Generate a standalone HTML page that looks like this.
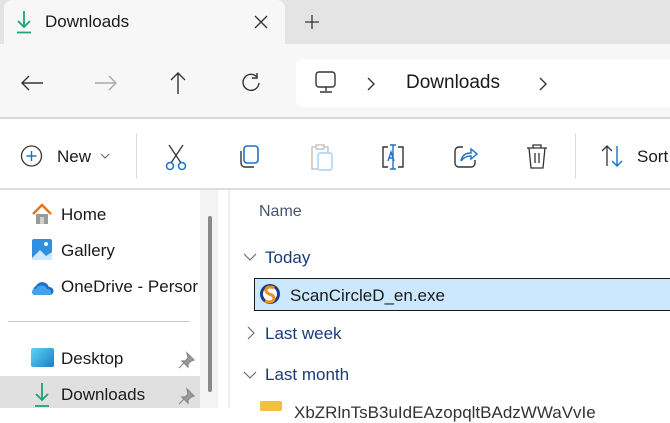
<!DOCTYPE html>
<html><head><meta charset="utf-8"><style>
*{margin:0;padding:0;box-sizing:border-box}
body{width:670px;height:408px;overflow:hidden;background:#fff;font-family:"Liberation Sans","DejaVu Sans",sans-serif;color:#1a1a1a;position:relative}
.a{position:absolute}
svg{position:absolute;overflow:visible}
.t{position:absolute;font-size:17px;white-space:nowrap}
.blue{color:#1b3a7a}
</style></head><body>
<div class="a" style="left:0;top:0;width:670px;height:46px;background:#e4e4e4"></div>
<div class="a" style="left:4px;top:0;width:281px;height:48px;background:#f7f7f7;border-radius:8px 8px 0 0"></div>
<div class="a" style="left:0;top:44px;width:670px;height:74px;background:#f7f7f7"></div>
<div class="a" style="left:0;top:117px;width:670px;height:2px;background:#d8d8d8"></div>
<div class="a" style="left:296px;top:59px;width:380px;height:48px;background:#fff;border-radius:7px"></div>
<svg style="left:16px;top:10px" width="16" height="24"><path d="M8 1v16M2 11l6 6 6-6M1 22.5h14" stroke="#1aa57a" stroke-width="1.8" fill="none"/></svg>
<div class="t" style="left:45px;top:12px;font-size:17px">Downloads</div>
<svg style="left:254px;top:15px" width="14" height="14"><path d="M1 1l12 12M13 1L1 13" stroke="#333" stroke-width="1.3"/></svg>
<svg style="left:305px;top:15px" width="14" height="14"><path d="M7 0v14M0 7h14" stroke="#333" stroke-width="1.3"/></svg>
<svg style="left:20px;top:74px" width="24" height="18"><path d="M23 9H2M9 2L2 9l7 7" stroke="#333" stroke-width="1.4" fill="none"/></svg>
<svg style="left:95px;top:74px" width="24" height="18"><path d="M0 9h21M14 2l7 7-7 7" stroke="#aaa" stroke-width="1.4" fill="none"/></svg>
<svg style="left:168px;top:71px" width="20" height="24"><path d="M10 23V2M3 9l7-7 7 7" stroke="#333" stroke-width="1.4" fill="none"/></svg>
<svg style="left:241px;top:73px" width="20" height="20"><path d="M16 4A8 8 0 1 0 18 10M16 0v5h-5" stroke="#333" stroke-width="1.4" fill="none"/></svg>
<svg style="left:315px;top:71px" width="22" height="24"><rect x="1" y="1" width="19" height="15" rx="3" stroke="#333" stroke-width="1.4" fill="none"/><path d="M11 16v4M5 21h12" stroke="#333" stroke-width="1.4"/></svg>
<svg style="left:366px;top:77px" width="10" height="14"><path d="M2 1l6 6-6 6" stroke="#333" stroke-width="1.4" fill="none"/></svg>
<div class="t" style="left:406px;top:72px;font-size:19px">Downloads</div>
<svg style="left:538px;top:77px" width="10" height="14"><path d="M2 1l6 6-6 6" stroke="#333" stroke-width="1.4" fill="none"/></svg>
<svg style="left:20px;top:145px" width="24" height="24"><circle cx="11.5" cy="11" r="10" stroke="#333" stroke-width="1.3" fill="none"/><path d="M11.5 6v10M6.5 11h10" stroke="#1a73c8" stroke-width="1.4"/></svg>
<div class="t" style="left:57px;top:147px">New</div>
<svg style="left:100px;top:153px" width="10" height="8"><path d="M1 1l4 4 4-4" stroke="#666" stroke-width="1.1" fill="none"/></svg>
<div class="a" style="left:136px;top:133px;width:1px;height:46px;background:#ddd"></div>
<svg style="left:164px;top:143px" width="26" height="28"><path d="M5 2l12 18M19 2L7 20" stroke="#333" stroke-width="1.3"/><circle cx="6" cy="23" r="3.5" stroke="#1a73c8" stroke-width="1.5" fill="none"/><circle cx="18" cy="23" r="3.5" stroke="#1a73c8" stroke-width="1.5" fill="none"/></svg>
<svg style="left:236px;top:144px" width="26" height="26"><rect x="8" y="2" width="14" height="17" rx="3" stroke="#1a73c8" stroke-width="1.6" fill="none"/><path d="M5 7v12a4 4 0 0 0 4 4h9" stroke="#333" stroke-width="1.4" fill="none"/></svg>
<svg style="left:309px;top:143px" width="24" height="28"><path d="M6 4H3v22h16V4h-3M7 2h8v4H7z" stroke="#bbb" stroke-width="1.3" fill="none"/><rect x="9" y="10" width="14" height="17" rx="2" stroke="#a9cff0" stroke-width="1.4" fill="#fff"/></svg>
<svg style="left:380px;top:144px" width="26" height="26"><path d="M8 3H3v20h5M18 3h5v20h-5" stroke="#333" stroke-width="1.4" fill="none"/><path d="M13 1v24M10 1h6M10 25h6M8 17l3-9 3 9M9 14h4" stroke="#1a73c8" stroke-width="1.4" fill="none"/></svg>
<svg style="left:453px;top:144px" width="26" height="26"><path d="M10 3H6a4 4 0 0 0-4 4v12a4 4 0 0 0 4 4h12a4 4 0 0 0 4-4v-3" stroke="#333" stroke-width="1.4" fill="none"/><path d="M8 17c1-6 5-8 10-8V5l6 5-6 5v-3c-4 0-7 1-10 5z" stroke="#1a73c8" stroke-width="1.4" fill="none"/></svg>
<svg style="left:525px;top:143px" width="24" height="28"><path d="M2 5h20M8 5V2h8v3M4 5l2 20h12l2-20M10 10v10M14 10v10" stroke="#333" stroke-width="1.3" fill="none"/></svg>
<div class="a" style="left:575px;top:133px;width:1px;height:46px;background:#ddd"></div>
<svg style="left:600px;top:144px" width="26" height="24"><path d="M7 22V2M2 7l5-5 5 5" stroke="#333" stroke-width="1.3" fill="none"/><path d="M17 2v20M12 17l5 5 5-5" stroke="#1a73c8" stroke-width="1.4" fill="none"/></svg>
<div class="t" style="left:637px;top:147px">Sort</div>
<div class="a" style="left:0;top:188px;width:670px;height:2px;background:#dcdcdc"></div>
<div class="a" style="left:200px;top:190px;width:18px;height:218px;background:#f3f3f3"></div>
<div class="a" style="left:208px;top:216px;width:4px;height:176px;background:#8a8a8a;border-radius:2px"></div>
<div class="a" style="left:228px;top:190px;width:2px;height:218px;background:#eee"></div>
<svg style="left:31px;top:203px" width="22" height="22"><path d="M2 11L11 2l9 9" stroke="#e5741c" stroke-width="2.4" fill="none"/><path d="M5 11v10h12V11" fill="#9a9a9a"/><rect x="9" y="14" width="4" height="7" fill="#cfcfcf"/></svg>
<div class="t" style="left:61px;top:205px">Home</div>
<svg style="left:31px;top:238px" width="22" height="24"><rect x="1" y="1" width="20" height="21" rx="2" fill="#2f8fe0"/><path d="M1 20l8-8 6 6 6-4v8H1z" fill="#cfe8ff"/><circle cx="15" cy="6" r="2" fill="#fff"/></svg>
<div class="t" style="left:61px;top:241px">Gallery</div>
<svg style="left:31px;top:280px" width="24" height="16"><path d="M5 15a5 5 0 0 1 0-9 7 7 0 0 1 13 1 4 4 0 0 1 1 8z" fill="#1f6fd1"/><path d="M3 15a3 3 0 0 1 2-6 6 6 0 0 1 11 0h1a3 3 0 0 1 3 3v3z" fill="#41a3ee"/></svg>
<div class="t" style="left:61px;top:277px">OneDrive - Persor</div>
<div class="a" style="left:8px;top:321px;width:182px;height:1px;background:#ccc"></div>
<div class="a" style="left:31px;top:348px;width:23px;height:19px;background:linear-gradient(135deg,#5fd3f0,#1a7fd0);border-radius:2px"></div>
<div class="t" style="left:61px;top:349px">Desktop</div>
<svg style="left:178px;top:351px" width="18" height="18"><path d="M9 2l7 7-3 1-3 3v3L4 10h3l3-3z M6 12l-5 5" stroke="#888" stroke-width="1.2" fill="#999"/></svg>
<div class="a" style="left:0;top:376px;width:200px;height:32px;background:#e0e0e0"></div>
<svg style="left:34px;top:382px" width="16" height="26"><path d="M8 1v17M2 12l6 6 6-6M1 24h14" stroke="#1aa57a" stroke-width="1.8" fill="none"/></svg>
<div class="t" style="left:61px;top:385px">Downloads</div>
<svg style="left:178px;top:387px" width="18" height="18"><path d="M9 2l7 7-3 1-3 3v3L4 10h3l3-3z M6 12l-5 5" stroke="#888" stroke-width="1.2" fill="#999"/></svg>
<div class="t" style="left:259px;top:203px;color:#4a5470;font-size:16px">Name</div>
<svg style="left:243px;top:252px" width="14" height="10"><path d="M1 2l6 6 6-6" stroke="#666" stroke-width="1.1" fill="none"/></svg>
<div class="t blue" style="left:265px;top:248px">Today</div>
<div class="a" style="left:254px;top:278px;width:420px;height:33px;background:#cce8ff;border:1px solid #1a1a1a"></div>
<svg style="left:259px;top:283px" width="22" height="22"><circle cx="11" cy="11" r="10" fill="#1d3d8f"/><circle cx="11" cy="11" r="7" fill="#fff"/><path d="M15 5c-3-2-9-1-8 3s8 3 8 7-5 5-9 3" stroke="#e8921f" stroke-width="3" fill="none"/></svg>
<div class="t" style="left:290px;top:286px">ScanCircleD_en.exe</div>
<svg style="left:246px;top:326px" width="10" height="14"><path d="M2 1l6 6-6 6" stroke="#666" stroke-width="1.1" fill="none"/></svg>
<div class="t blue" style="left:265px;top:324px">Last week</div>
<svg style="left:243px;top:370px" width="14" height="10"><path d="M1 2l6 6 6-6" stroke="#666" stroke-width="1.1" fill="none"/></svg>
<div class="t blue" style="left:265px;top:365px">Last month</div>
<div class="a" style="left:260px;top:401px;width:22px;height:10px;background:#f0c040;border-radius:2px"></div>
<div class="t" style="left:294px;top:403px;color:#333">XbZRlnTsB3uIdEAzopqltBAdzWWaVvIe</div>
</body></html>
